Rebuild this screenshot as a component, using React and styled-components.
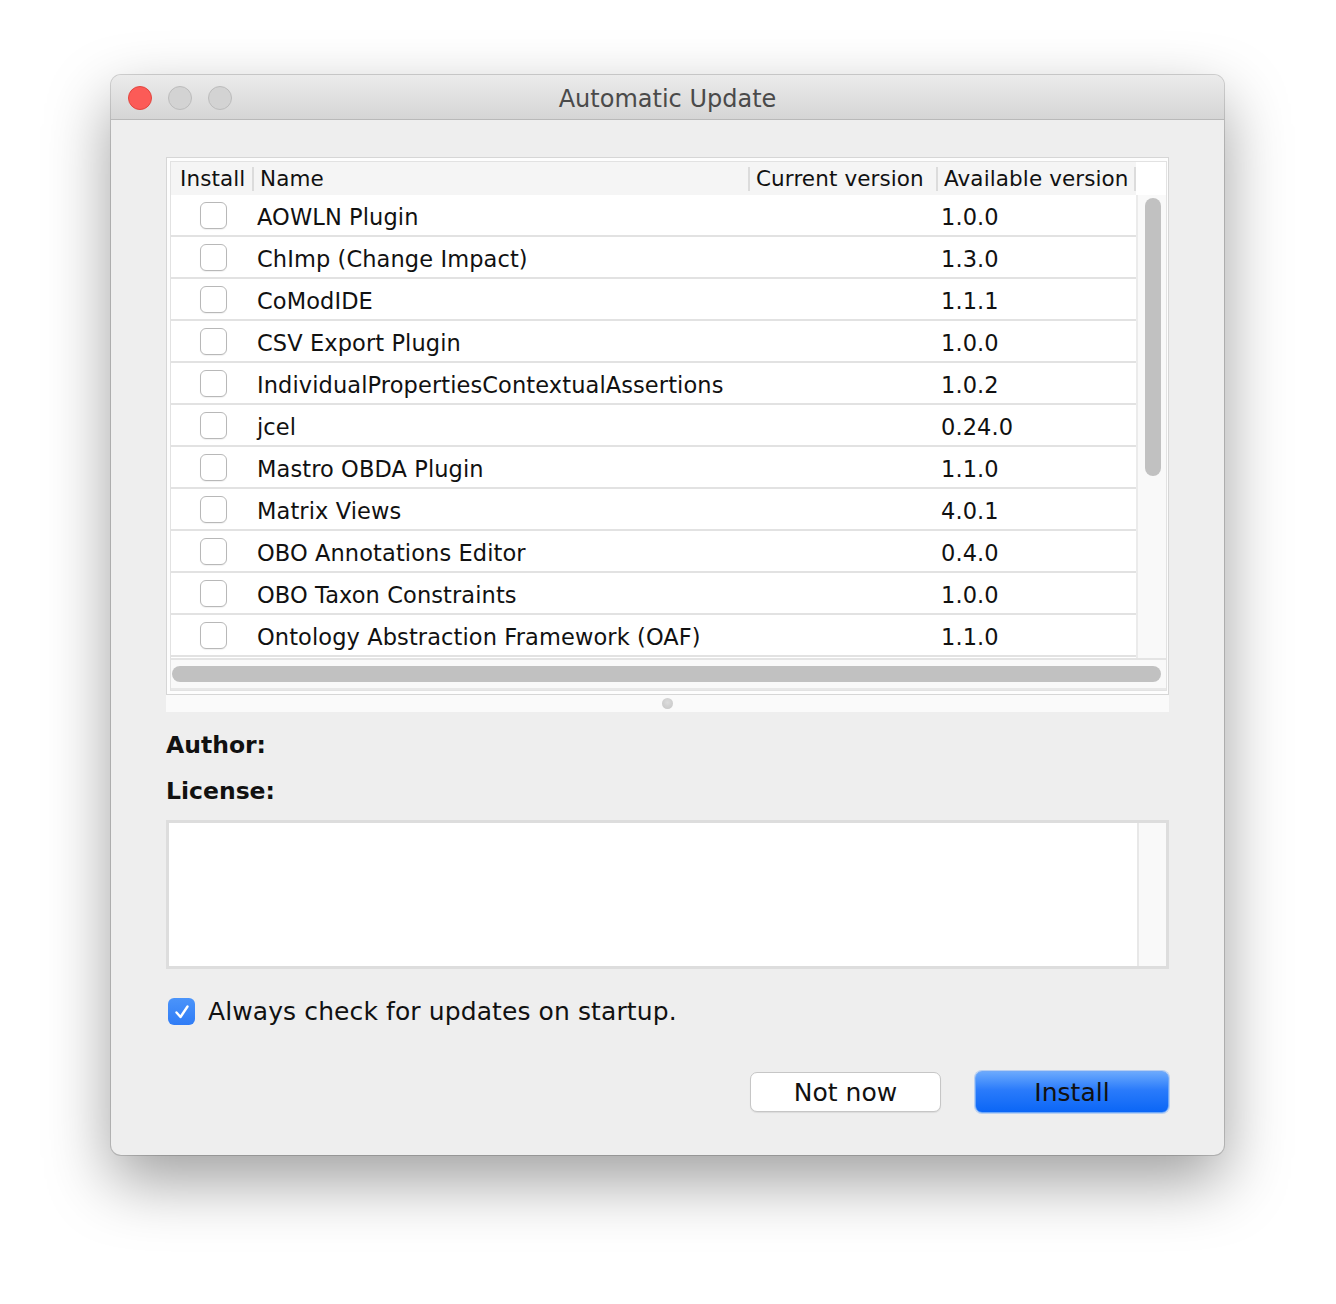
import React from 'react';
import styled, { createGlobalStyle } from 'styled-components';

const Global = createGlobalStyle`
    body {
        margin: 0;
        background: #ffffff;
        font-family: 'DejaVu Sans', 'Liberation Sans', sans-serif;
    }
`;

const Page = styled.div`
    padding: 75px 0 148px 111px;
`;

const Window = styled.div`
    width: 1113px;
    background: #eeeeee;
    border-radius: 10px;
    overflow: hidden;
    box-shadow: 0 0 0 1px rgba(0, 0, 0, 0.16), 0 26px 64px rgba(0, 0, 0, 0.38);
`;

const TitleBar = styled.div`
    height: 44px;
    display: grid;
    grid-template-columns: 1fr auto 1fr;
    align-items: center;
    background: linear-gradient(#ebebeb, #d5d5d5);
    border-bottom: 1px solid #b9b9b9;
`;

const Lights = styled.div`
    display: flex;
    gap: 16px;
    padding: 2px 0 0 17px;
`;

const Light = styled.span`
    width: 22px;
    height: 22px;
    border-radius: 50%;
    background: ${p => (p.$red ? '#fc5b57' : '#d3d3d3')};
    border: 1px solid ${p => (p.$red ? '#e2463f' : '#bcbcbc')};
`;

const Title = styled.div`
    font-size: 24px;
    color: #4a4a4a;
    padding-top: 4px;
`;

const Content = styled.div`
    padding: 37px 55px 42px;
    display: flex;
    flex-direction: column;
`;

const ScrollPane = styled.div`
    height: 538px;
    box-sizing: border-box;
    border: 1px solid #d6d6d6;
    padding: 3px;
    background: #fdfdfd;
    display: flex;
`;

const Inner = styled.div`
    flex: 1;
    border: 1px solid #e2e2e2;
    background: #ffffff;
    display: flex;
    flex-direction: column;
`;

const TableArea = styled.div`
    display: flex;
    height: 496px;
`;

const Table = styled.div`
    width: 965px;
    display: flex;
    flex-direction: column;
`;

const cols = '83px 496px 188px 198px';

const HeaderRow = styled.div`
    display: grid;
    grid-template-columns: ${cols};
    height: 33px;
    align-items: center;
    background: #f5f5f5;
`;

const HeaderCell = styled.div`
    height: 24px;
    line-height: 24px;
    font-size: 21.5px;
    color: #111;
    padding-left: ${p => p.$pad}px;
    border-right: 2px solid #dcdcdc;
    white-space: nowrap;
    letter-spacing: 0.1px;
`;

const Row = styled.div`
    display: grid;
    grid-template-columns: ${cols};
    height: 40px;
    box-sizing: content-box;
    align-items: center;
    border-bottom: 2px solid #e2e2e2;
    font-size: 22.5px;
    letter-spacing: 0.1px;
    color: #111;
`;

const CheckCell = styled.div`
    display: flex;
    justify-content: center;
    padding-left: 2px;
`;

const Box = styled.span`
    width: 27px;
    height: 27px;
    box-sizing: border-box;
    border-radius: 6px;
    background: #ffffff;
    border: 1px solid #b8b8b8;
    box-shadow: 0 1px 1px rgba(0, 0, 0, 0.06);
`;

const Cell = styled.div`
    padding: 3px 0 0 ${p => p.$pad}px;
    white-space: nowrap;
`;

const VScroll = styled.div`
    flex: 1;
    display: flex;
    flex-direction: column;
`;

const Corner = styled.div`
    height: 33px;
    background: #ffffff;
`;

const VTrack = styled.div`
    flex: 1;
    background: #f9f9f9;
    border-left: 2px solid #ebebeb;
    padding: 3px 5px 0 7px;
`;

const VThumb = styled.div`
    width: 16px;
    height: 278px;
    border-radius: 8px;
    background: #c1c1c1;
`;

const HTrack = styled.div`
    flex: 1;
    background: #f9f9f9;
    border-top: 2px solid #e4e4e4;
    border-bottom: 2px solid #e8e8e8;
    padding: 6px 5px 0 1px;
`;

const HThumb = styled.div`
    height: 16px;
    border-radius: 8px;
    background: #c1c1c1;
`;

const Divider = styled.div`
    height: 17px;
    background: #fafafa;
    display: flex;
    align-items: center;
    justify-content: center;
`;

const Dot = styled.span`
    width: 11px;
    height: 11px;
    border-radius: 50%;
    background: radial-gradient(circle at 50% 40%, #dcdcdc, #c4c4c4);
`;

const Label = styled.div`
    font-size: 23.5px;
    font-weight: bold;
    color: #111;
    line-height: 46px;
    margin-top: ${p => p.$top || 0}px;
`;

const TextBox = styled.div`
    margin-top: 6px;
    height: 149px;
    box-sizing: border-box;
    border: 3px solid #dddddd;
    background: #ffffff;
    display: flex;
    justify-content: flex-end;
`;

const TextScroll = styled.div`
    width: 27px;
    background: #f9f9f9;
    border-left: 2px solid #e8e8e8;
`;

const CheckRow = styled.label`
    margin-top: 28px;
    display: flex;
    align-items: center;
    gap: 13px;
    padding-left: 2px;
    font-size: 25px;
    letter-spacing: 0.1px;
    color: #111;
`;

const BlueBox = styled.span`
    width: 27px;
    height: 27px;
    border-radius: 6px;
    background: linear-gradient(#4b94fa, #2f7cf6);
    display: flex;
    align-items: center;
    justify-content: center;
`;

const Buttons = styled.div`
    margin-top: 45px;
    display: flex;
    justify-content: flex-end;
    align-items: center;
    gap: 34px;
`;

const Button = styled.button`
    font-family: inherit;
    font-size: 25px;
    color: #111;
    box-sizing: border-box;
    border-radius: 7px;
    cursor: pointer;
    padding: 0;
    width: ${p => (p.$primary ? 194 : 191)}px;
    height: ${p => (p.$primary ? 42 : 40)}px;
    background: ${p => (p.$primary ? 'linear-gradient(#6aa9fd, #2a7bfb 45%, #0b66f6)' : '#ffffff')};
    border: 1px solid ${p => (p.$primary ? '#6fa8f8' : '#c6c6c6')};
    box-shadow: ${p => (p.$primary ? '0 0 0 1px rgba(80,150,250,0.35)' : '0 1px 1px rgba(0,0,0,0.08)')};
`;

const plugins = [
    ['AOWLN Plugin', '1.0.0'],
    ['ChImp (Change Impact)', '1.3.0'],
    ['CoModIDE', '1.1.1'],
    ['CSV Export Plugin', '1.0.0'],
    ['IndividualPropertiesContextualAssertions', '1.0.2'],
    ['jcel', '0.24.0'],
    ['Mastro OBDA Plugin', '1.1.0'],
    ['Matrix Views', '4.0.1'],
    ['OBO Annotations Editor', '0.4.0'],
    ['OBO Taxon Constraints', '1.0.0'],
    ['Ontology Abstraction Framework (OAF)', '1.1.0'],
];

const App = () => (
    <Page>
        <Global />
        <Window>
            <TitleBar>
                <Lights>
                    <Light $red />
                    <Light />
                    <Light />
                </Lights>
                <Title>Automatic Update</Title>
                <div />
            </TitleBar>
            <Content>
                <ScrollPane>
                    <Inner>
                        <TableArea>
                            <Table>
                                <HeaderRow>
                                    <HeaderCell $pad={9}>Install</HeaderCell>
                                    <HeaderCell $pad={6}>Name</HeaderCell>
                                    <HeaderCell $pad={6}>Current version</HeaderCell>
                                    <HeaderCell $pad={6}>Available version</HeaderCell>
                                </HeaderRow>
                                {plugins.map(([name, version]) => (
                                    <Row key={name}>
                                        <CheckCell><Box /></CheckCell>
                                        <Cell $pad={3}>{name}</Cell>
                                        <Cell />
                                        <Cell $pad={3}>{version}</Cell>
                                    </Row>
                                ))}
                            </Table>
                            <VScroll>
                                <Corner />
                                <VTrack><VThumb /></VTrack>
                            </VScroll>
                        </TableArea>
                        <HTrack><HThumb /></HTrack>
                    </Inner>
                </ScrollPane>
                <Divider><Dot /></Divider>
                <Label $top={10}>Author:</Label>
                <Label>License:</Label>
                <TextBox><TextScroll /></TextBox>
                <CheckRow>
                    <BlueBox>
                        <svg width="18" height="18" viewBox="0 0 18 18">
                            <path d="M3.5 9.5 L7.5 14 L14.5 3.5" fill="none" stroke="#fff" strokeWidth="2.4" strokeLinecap="round" strokeLinejoin="round" />
                        </svg>
                    </BlueBox>
                    Always check for updates on startup.
                </CheckRow>
                <Buttons>
                    <Button>Not now</Button>
                    <Button $primary>Install</Button>
                </Buttons>
            </Content>
        </Window>
    </Page>
);

export default App;
